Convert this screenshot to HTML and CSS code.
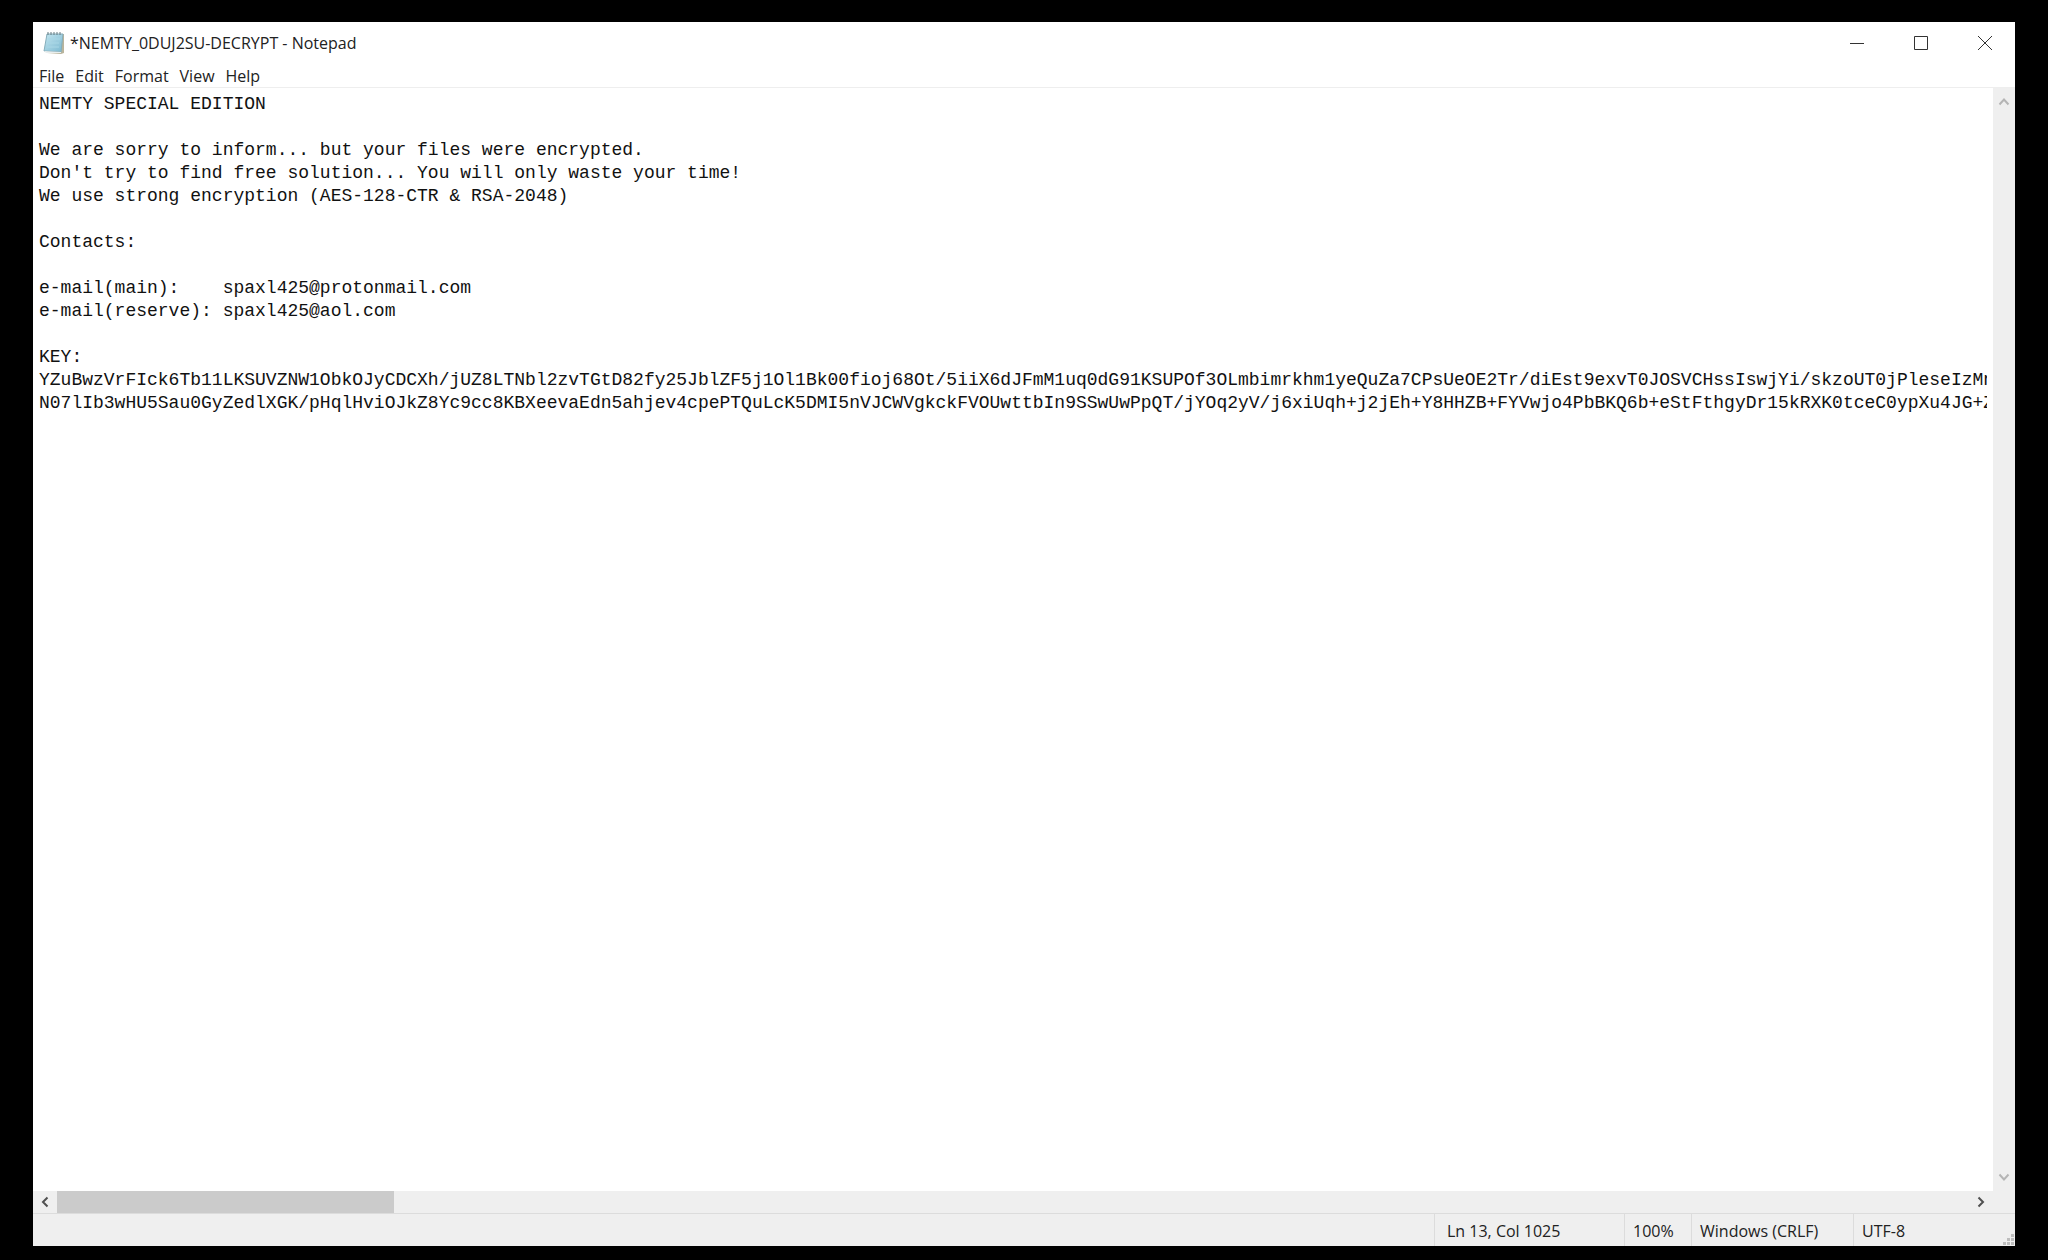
FILE: index.html
```
<!DOCTYPE html>
<html lang="en">
<head>
  <meta charset="UTF-8">
  <meta name="viewport" content="width=device-width, initial-scale=1.0">
  <title>*NEMTY_0DUJ2SU-DECRYPT - Notepad</title>
  <link rel="stylesheet" href="styles.css">
</head>
<body>
  <div class="window">
    <header class="titlebar">
      <svg class="app-icon" width="22" height="24" viewBox="0 0 22 24" aria-hidden="true">
        <defs>
          <linearGradient id="page" x1="0" y1="0" x2="1" y2="1">
            <stop offset="0" stop-color="#c4e6f0"/>
            <stop offset="1" stop-color="#7bb8d0"/>
          </linearGradient>
        </defs>
        <path d="M5 4 L21 3 L21 22 L18 23 L4 22 Z" fill="#b9b49c"/>
        <path d="M4 3 L20 3 L18 21 L1 20 Z" fill="url(#page)" stroke="#86aebb" stroke-width="1"/>
        <path d="M1 20 L18 21 L18 22 L3 22 Z" fill="#e9eeee"/>
        <path d="M5 1v3M8 1v3M11 1v3M14 1v3M17 1v3" stroke="#667c83" stroke-width="1"/>
        <path d="M5 8h12M4 12h12M4 16h12" stroke="#a9d7e6" stroke-width="1"/>
      </svg>
      <h1>*NEMTY_0DUJ2SU-DECRYPT - Notepad</h1>
      <div class="controls">
        <button type="button" aria-label="Minimize">
          <svg width="14" height="14" viewBox="0 0 14 14"><path d="M0 7.5h14"/></svg>
        </button>
        <button type="button" aria-label="Maximize">
          <svg width="14" height="14" viewBox="0 0 14 14"><path d="M.5 .5h13v13h-13z"/></svg>
        </button>
        <button type="button" aria-label="Close">
          <svg width="14" height="14" viewBox="0 0 14 14"><path d="M0 0l14 14M14 0L0 14"/></svg>
        </button>
      </div>
    </header>

    <nav class="menu">
      <button type="button">File</button>
      <button type="button">Edit</button>
      <button type="button">Format</button>
      <button type="button">View</button>
      <button type="button">Help</button>
    </nav>

    <main class="editor">
      <textarea class="text" wrap="off" spellcheck="false" aria-label="Text editor">NEMTY SPECIAL EDITION

We are sorry to inform... but your files were encrypted.
Don't try to find free solution... You will only waste your time!
We use strong encryption (AES-128-CTR &amp; RSA-2048)

Contacts:

e-mail(main):    spaxl425@protonmail.com
e-mail(reserve): spaxl425@aol.com

KEY:
YZuBwzVrFIck6Tb11LKSUVZNW1ObkOJyCDCXh/jUZ8LTNbl2zvTGtD82fy25JblZF5j1Ol1Bk00fioj68Ot/5iiX6dJFmM1uq0dG91KSUPOf3OLmbimrkhm1yeQuZa7CPsUeOE2Tr/diEst9exvT0JOSVCHssIswjYi/skzoUT0jPleseIzMn
N07lIb3wHU5Sau0GyZedlXGK/pHqlHviOJkZ8Yc9cc8KBXeevaEdn5ahjev4cpePTQuLcK5DMI5nVJCWVgkckFVOUwttbIn9SSwUwPpQT/jYOq2yV/j6xiUqh+j2jEh+Y8HHZB+FYVwjo4PbBKQ6b+eStFthgyDr15kRXK0tceC0ypXu4JG+Z</textarea>
      <div class="scroll-y">
        <button type="button" aria-label="Scroll up">
          <svg width="12" height="10" viewBox="0 0 12 10"><path d="M1.500 7.500L6 2.500l4.500 5"/></svg>
        </button>
        <button type="button" aria-label="Scroll down">
          <svg width="12" height="10" viewBox="0 0 12 10"><path d="M1.500 2.500L6 7.500l4.500-5"/></svg>
        </button>
      </div>
      <div class="scroll-x">
        <button type="button" aria-label="Scroll left">
          <svg width="10" height="12" viewBox="0 0 10 12"><path d="M7.500 1.500L3 6l4.500 4.500"/></svg>
        </button>
        <div class="track"><div class="thumb"></div></div>
        <button type="button" aria-label="Scroll right">
          <svg width="10" height="12" viewBox="0 0 10 12"><path d="M2.500 1.500L7 6l-4.500 4.500"/></svg>
        </button>
      </div>
      <div class="corner"></div>
    </main>

    <footer class="status">
      <span class="position">Ln 13, Col 1025</span>
      <span class="zoom">100%</span>
      <span class="endings">Windows (CRLF)</span>
      <span class="encoding">UTF-8</span>
      <svg class="grip" width="12" height="12" viewBox="0 0 12 12" aria-hidden="true">
        <path d="M8 0h3v3h-3zM4 4h3v3h-3zM8 4h3v3h-3zM0 8h3v3h-3zM4 8h3v3h-3zM8 8h3v3h-3z"/>
      </svg>
    </footer>
  </div>
</body>
</html>
```
FILE: styles.css
```
* {
  box-sizing: border-box;
}
body {
  display: flex;
  height: 100vh;
  margin: 0;
  padding: 22px 33px 14px;
  background-color: #000;
  color: #222;
  font-family: "Open Sans", "Noto Sans", sans-serif;
  font-size: 16px;
}
button {
  display: flex;
  align-items: center;
  justify-content: center;
  padding: 0;
  border: none;
  background: none;
  color: inherit;
  font: inherit;
}
.window {
  display: flex;
  flex: 1;
  flex-direction: column;
  min-width: 0;
  background-color: #fff;
}

/* Title bar */
.titlebar {
  display: flex;
  align-items: center;
  height: 41px;
  padding-left: 10px;
}
.titlebar h1 {
  flex: 1;
  margin: 0 0 0 5px;
  font-size: 16px;
  font-weight: normal;
}
.controls {
  display: flex;
  gap: 4px;
}
.controls button {
  width: 60px;
  height: 40px;
}
.controls path {
  fill: none;
  stroke: #333;
}

/* Menu */
.menu {
  display: flex;
  gap: 11px;
  height: 25px;
  padding: 2px 0 0 6px;
  border-bottom: 1px solid #eee;
}

/* Text area and scroll bars */
.editor {
  display: grid;
  flex: 1;
  grid-template-columns: 1fr 22px;
  grid-template-rows: 1fr 22px;
  min-height: 0;
}
.text {
  width: 100%;
  height: 100%;
  margin: 0;
  padding: 5px 0 0 6px;
  overflow: hidden;
  border: none;
  border-right: 6px solid #fff;
  outline: none;
  resize: none;
  background-color: #fff;
  color: #111;
  font-family: "Liberation Mono", monospace;
  font-size: 18px;
  line-height: 23px;
}
.scroll-y {
  display: flex;
  flex-direction: column;
  justify-content: space-between;
  background-color: #efefef;
}
.scroll-y button {
  height: 28px;
}
.scroll-y path {
  fill: none;
  stroke: #b5b5b5;
  stroke-width: 2;
}
.scroll-x {
  display: flex;
  background-color: #efefef;
}
.scroll-x button {
  width: 24px;
}
.scroll-x path {
  fill: none;
  stroke: #505050;
  stroke-width: 2;
}
.track {
  display: flex;
  flex: 1;
}
/* the page shows 3/17 of the longest line */
.thumb {
  width: calc(100% * 3 / 17);
  background-color: #cbcbcb;
}
.corner {
  background-color: #efefef;
}

/* Status bar */
.status {
  position: relative;
  display: flex;
  justify-content: flex-end;
  height: 33px;
  border-top: 1px solid #dcdcdc;
  background-color: #efefef;
  line-height: 34px;
}
.status span {
  height: 32px;
  padding-left: 8px;
  border-left: 1px solid #dcdcdc;
  white-space: nowrap;
}
.status .position {
  width: 190px;
  padding-left: 12px;
}
.status .zoom {
  width: 67px;
}
.status .endings,
.status .encoding {
  width: 162px;
}
.grip {
  position: absolute;
  right: 0;
  bottom: 0;
  fill: #bdbdbd;
}
```
